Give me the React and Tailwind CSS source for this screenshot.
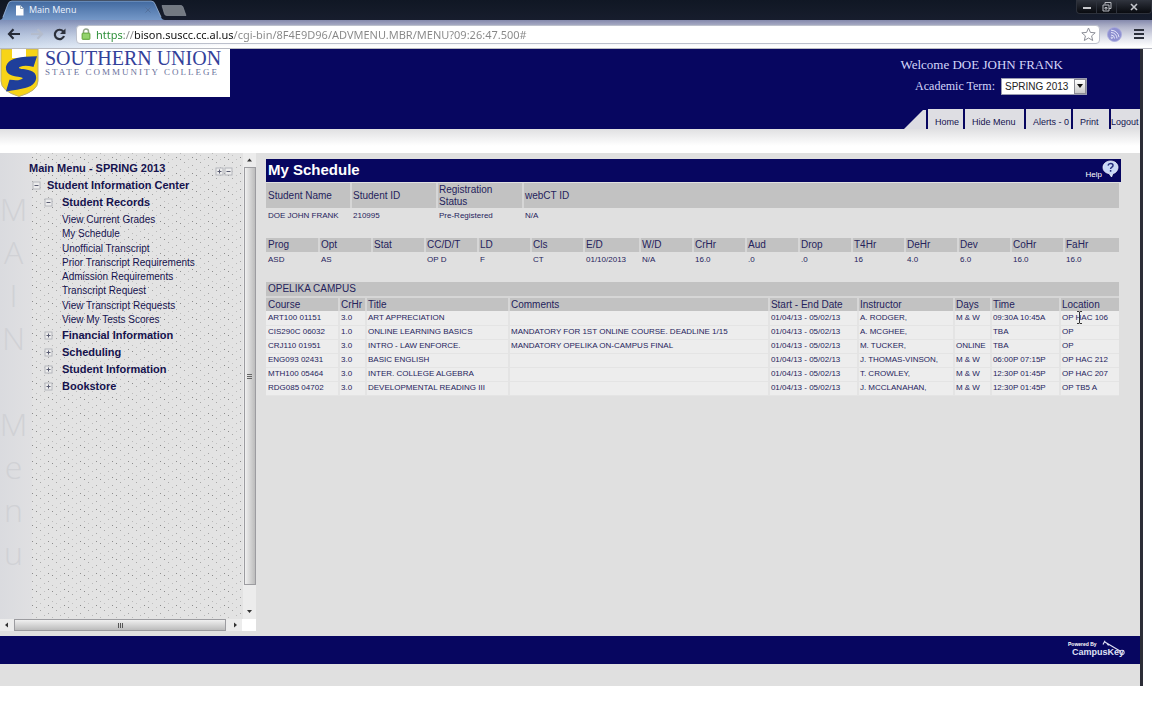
import React, { useState } from "react";

const records = [
  "View Current Grades",
  "My Schedule",
  "Unofficial Transcript",
  "Prior Transcript Requirements",
  "Admission Requirements",
  "Transcript Request",
  "View Transcript Requests",
  "View My Tests Scores",
];

const sections = ["Financial Information", "Scheduling", "Student Information", "Bookstore"];

const totals = [
  ["Prog", "ASD"],
  ["Opt", "AS"],
  ["Stat", ""],
  ["CC/D/T", "OP D"],
  ["LD", "F"],
  ["Cls", "CT"],
  ["E/D", "01/10/2013"],
  ["W/D", "N/A"],
  ["CrHr", "16.0"],
  ["Aud", ".0"],
  ["Drop", ".0"],
  ["T4Hr", "16"],
  ["DeHr", "4.0"],
  ["Dev", "6.0"],
  ["CoHr", "16.0"],
  ["FaHr", "16.0"],
];

const courseHeads = ["Course", "CrHr", "Title", "Comments", "Start - End Date", "Instructor", "Days", "Time", "Location"];

const courses = [
  ["ART100 01151", "3.0", "ART APPRECIATION", "", "01/04/13 - 05/02/13", "A. RODGER,", "M & W", "09:30A 10:45A", "OP HAC 106"],
  ["CIS290C 06032", "1.0", "ONLINE LEARNING BASICS", "MANDATORY FOR 1ST ONLINE COURSE. DEADLINE 1/15", "01/04/13 - 05/02/13", "A. MCGHEE,", "", "TBA", "OP"],
  ["CRJ110 01951", "3.0", "INTRO - LAW ENFORCE.", "MANDATORY OPELIKA ON-CAMPUS FINAL", "01/04/13 - 05/02/13", "M. TUCKER,", "ONLINE", "TBA", "OP"],
  ["ENG093 02431", "3.0", "BASIC ENGLISH", "", "01/04/13 - 05/02/13", "J. THOMAS-VINSON,", "M & W", "06:00P 07:15P", "OP HAC 212"],
  ["MTH100 05464", "3.0", "INTER. COLLEGE ALGEBRA", "", "01/04/13 - 05/02/13", "T. CROWLEY,", "M & W", "12:30P 01:45P", "OP HAC 207"],
  ["RDG085 04702", "3.0", "DEVELOPMENTAL READING III", "", "01/04/13 - 05/02/13", "J. MCCLANAHAN,", "M & W", "12:30P 01:45P", "OP TB5 A"],
];

const head = "border-r-2 border-[#d6d6d6] bg-[#c2c2c2] pl-px text-left text-[10px] leading-[12px] font-normal whitespace-nowrap first:pl-[2px] last:border-r-0";
const cell = "pl-[2px] text-left text-[8px] whitespace-nowrap";

const TreeIcon = ({ open }) => (
  <svg width="9" height="9" viewBox="0 0 9 9" className="shrink-0" aria-hidden="true">
    <rect x="1" y="1" width="7" height="7" fill="#ececec" stroke="#b4b6bc" />
    <path d={open ? "M2.500 4.500h4" : "M2.500 4.500h4M4.500 2.500v4"} stroke="#5a5d72" />
  </svg>
);

const BrowserBar = () => (
  <div className="font-['Noto_Sans',sans-serif]">
    <div className="relative flex h-[20px] items-start bg-linear-to-b from-[#101724] to-[#171d2d]">
      <div className="relative flex h-[20px] w-[165px] items-center pl-[15px]">
        <svg width="165" height="20" viewBox="0 0 165 20" className="absolute top-0 left-0" aria-hidden="true">
          <defs>
            <linearGradient id="tab" x1="0" y1="0" x2="0" y2="1">
              <stop offset="0" stopColor="#41699f" />
              <stop offset="1" stopColor="#7598c8" />
            </linearGradient>
          </defs>
          <path d="M0 20 2 19 8 4Q9 1 12 1H151Q154 1 155 4L161 17Q162 20 165 20Z" fill="url(#tab)" />
          <path d="M3 17 8 4Q9 1 12 1H151Q154 1 155 4L161 17" fill="none" stroke="#a6c1e4" strokeOpacity="0.7" />
        </svg>
        <svg width="9" height="11" viewBox="0 0 9 11" className="relative" aria-hidden="true">
          <path d="M1 .5h4.500l3 3V10.500H1z" fill="#fff" />
          <path d="M5.500.5v3h3" fill="none" stroke="#9ab" />
        </svg>
        <span className="relative ml-[5px] flex-1 font-['Open_Sans',sans-serif] text-[9px] leading-[20px] text-[#edf3ff]">Main Menu</span>
        <button aria-label="Close tab" className="relative mr-[13px]">
          <svg width="8" height="8" viewBox="0 0 8 8"><path d="m1.500 1.500 5 5m0-5-5 5" stroke="#54719c" /></svg>
        </button>
      </div>
      <button aria-label="New tab" className="mt-[5px] -ml-[4px]">
        <svg width="26" height="11" viewBox="0 0 26 11"><path d="M1 .5h19q1.500 0 2 1.500l3 8.500H6q-2 0-2.500-1.500z" fill="#737982" stroke="#9299a2" strokeWidth=".6" /></svg>
      </button>
      <div className="ml-auto flex h-[14px] w-[76px] divide-x divide-[#2d313b] rounded-b border border-t-0 border-[#2d313b] bg-linear-to-b from-[#30343e] to-[#090b10]">
        <button aria-label="Minimize" className="flex w-[20px] items-end justify-center pb-[4px]"><span className="h-[2px] w-[8px] bg-[#c8c8cc]" /></button>
        <button aria-label="Restore" className="flex w-[20px] items-center justify-center">
          <svg width="10" height="10" viewBox="0 0 10 10" fill="none" stroke="#b8bac0"><path d="M3 2.500V.5h6v6H7" /><path d="M1 3h6v6H1zM3 5.500h2v1.500H3z" /></svg>
        </button>
        <button aria-label="Close" className="flex flex-1 items-center justify-center">
          <svg width="8" height="8" viewBox="0 0 8 8"><path d="m1 1 6 6m0-6L1 7" stroke="#c4c6cc" strokeWidth="1.600" /></svg>
        </button>
      </div>
    </div>
    <div className="flex h-[29px] items-center border-b border-[#b8bac2] bg-[linear-gradient(90deg,#6f97cc59,#6f97cc00_220px),linear-gradient(180deg,#8489ac_0,#b2b5cb_25%,#dddfe9_60%,#ffffff_95%)]">
      <div className="flex w-[76px] shrink-0 items-center gap-[9px] pl-[7px]">
        <button aria-label="Back"><svg width="14" height="12" viewBox="0 0 14 12" fill="none" stroke="#272c38" strokeWidth="2.200"><path d="M13 6H2M6.500 1.200 2 6l4.500 4.800" /></svg></button>
        <button aria-label="Forward"><svg width="14" height="12" viewBox="0 0 14 12" fill="none" stroke="#b4bccc" strokeWidth="2.200"><path d="M1 6h11M7.500 1.200 12 6l-4.500 4.800" /></svg></button>
        <button aria-label="Reload"><svg width="13" height="13" viewBox="0 0 13 13"><path d="M10.200 3.500A4.700 4.700 0 1 0 11 8" fill="none" stroke="#2c303b" strokeWidth="2.200" /><path d="M12.500.5v5.500H7z" fill="#2c303b" /></svg></button>
      </div>
      <div className="flex h-[19px] min-w-0 flex-1 items-center rounded-sm border border-[#bcc0cc] bg-white pr-[3px] pl-[4px]">
        <svg width="10" height="12" viewBox="0 0 10 12" aria-hidden="true">
          <path d="M2.500 6V3.500a2.500 2.500 0 0 1 5 0V6" fill="none" stroke="#93a58a" strokeWidth="1.500" />
          <rect x="1" y="5" width="8" height="6.500" rx="1" fill="#85c95b" stroke="#60a03f" strokeWidth=".8" />
          <path d="M2 7h6M2 9h6" stroke="#b3e294" strokeWidth=".7" />
        </svg>
        <input
          aria-label="Address"
          className="ml-[5px] h-[17px] min-w-0 flex-1 bg-[linear-gradient(90deg,#278c33_28px,#888888_28px,#888888_39px,#111111_39px,#111111_138px,#868686_138px)] bg-clip-text text-[11px] text-transparent outline-none"
          defaultValue="https://bison.suscc.cc.al.us/cgi-bin/8F4E9D96/ADVMENU.MBR/MENU?09:26:47.500#"
        />
        <button aria-label="Bookmark">
          <svg width="15" height="15" viewBox="0 0 15 15"><path d="m7.500 1 1.900 4.400 4.800.4-3.600 3.100 1.100 4.600-4.200-2.500-4.200 2.500 1.100-4.600L.8 5.800l4.800-.4z" fill="#fff" stroke="#8d8f98" /></svg>
        </button>
      </div>
      <button aria-label="Feed" className="ml-[7px]">
        <svg width="15" height="15" viewBox="0 0 15 15" fill="none" stroke="#e4e5fa"><circle cx="7.500" cy="7.500" r="7" fill="#8d8fd0" stroke="#a8aade" strokeWidth=".8" /><path d="M4 8a3.500 3.500 0 0 1 3.500 3.500M4 5.500a6 6 0 0 1 6 6M4 3.200a8 8 0 0 1 8 7" /><circle cx="4.800" cy="10.800" r=".7" /></svg>
      </button>
      <button aria-label="Browser menu" className="mr-[8px] ml-[12px] flex w-[10px] flex-col gap-[2px]">
        <span className="h-[2px] bg-[#2b2f3a]" />
        <span className="h-[2px] bg-[#2b2f3a]" />
        <span className="h-[2px] bg-[#2b2f3a]" />
      </button>
    </div>
  </div>
);

const Logo = () => (
  <div className="flex h-[48px] w-[230px] bg-white">
    <svg width="40" height="48" viewBox="0 0 40 48" className="shrink-0" aria-hidden="true">
      <path d="M1 0H38V32Q38 42 19 47.500 1 42 1 32Z" fill="#f7d417" stroke="#b9ad74" />
      <path d="M12 0h14v9H12z" fill="#fff" />
      <path d="M36 8 33 17Q25 15 20 17C17 18 18 20 21 20.500 31 21.500 37 24 35 31 33 38 22 39 7 41.500L10 31.500Q20 33 23 30C25 27.500 20 27.500 15 26.500 7 25 5 20 8 15 12 9 24 8 36 8Z" fill="#1f3f9b" stroke="#1f3f9b" strokeWidth="1.500" />
    </svg>
    <div className="min-w-0 flex-1 pl-[5px] font-['Liberation_Serif',serif] whitespace-nowrap text-[#33419a]">
      <div className="text-[20px] leading-[18px]">SOUTHERN UNION</div>
      <div className="text-[9px] leading-[10px] tracking-[2px] text-[#6c739c]">STATE COMMUNITY COLLEGE</div>
    </div>
  </div>
);

const Header = ({ term, setTerm }) => (
  <header>
    <div className="flex h-[80px] items-start justify-between bg-[#070660]">
      <Logo />
      <div className="flex h-full flex-col items-end font-['Liberation_Serif',serif] text-[#d5d7fa]">
        <p className="mt-[7px] mr-[77px] text-[13px] leading-[18px]">Welcome DOE JOHN FRANK</p>
        <div className="mt-[3px] mr-[53px] flex items-center gap-[6px]">
          <label htmlFor="term" className="text-[12px] leading-[18px]">Academic Term:</label>
          <div className="relative">
            <select
              id="term"
              className="block h-[17px] w-[86px] appearance-none border border-[#9a9cb0] bg-white pl-[3px] font-['Liberation_Sans',sans-serif] text-[10px] leading-[15px] text-[#222]"
              value={term}
              onChange={(event) => setTerm(event.target.value)}
            >
              <option>SPRING 2013</option>
            </select>
            <span className="pointer-events-none absolute top-[1px] right-[1px] flex h-[15px] w-[12px] items-center justify-center border border-[#8c8c94] bg-linear-to-b from-white to-[#c9c9c9]">
              <svg width="6" height="4" viewBox="0 0 6 4"><path d="M0 0h6L3 4z" fill="#111" /></svg>
            </span>
          </div>
        </div>
        <nav className="mt-auto flex h-[20px] font-['Liberation_Sans',sans-serif] text-[9px] leading-[26px] text-[#15124e]">
          <svg width="22" height="20" viewBox="0 0 22 20" aria-hidden="true"><path d="M0 20 19 1H22V20Z" fill="#dcdce2" /></svg>
          <a href="#home" className="w-[37px] border-l-2 border-[#070660] bg-[#dedee3] pl-[7px]">Home</a>
          <a href="#hide" className="w-[61px] border-l-2 border-[#070660] bg-[#dedee3] pl-[7px]">Hide Menu</a>
          <a href="#alerts" className="w-[47px] border-l-2 border-[#070660] bg-[#dedee3] pl-[7px]">Alerts - 0</a>
          <a href="#print" className="w-[38px] border-l-2 border-[#070660] bg-[#dedee3] pl-[7px]">Print</a>
          <a href="#logout" className="w-[31px] border-l-2 border-[#070660] bg-[#dedee3] whitespace-nowrap">Logout</a>
        </nav>
      </div>
    </div>
    <div className="h-[24px] bg-linear-to-b from-[#e0e0e2] to-white to-70%" />
  </header>
);

const MainMenu = () => (
  <div className="flex h-[466px]">
    <div aria-hidden="true" className="flex w-[32px] shrink-0 flex-col items-center bg-linear-to-r from-[#dadbdf] to-[#e0e0e2] pt-[34px] pr-[5px] font-['Open_Sans',sans-serif] text-[32px] leading-[43px] font-light text-[#d0d1d5]">
      {["M", "A", "I", "N"].map((letter) => <span key={letter}>{letter}</span>)}
      <span className="mt-[43px]">M</span>
      <span>e</span>
      <span>n</span>
      <span>u</span>
    </div>
    <nav className="min-w-0 flex-1 bg-[#e3e3e3] bg-[radial-gradient(circle_at_0.5px_4.5px,#8c8c8c_0.5px,transparent_0.8px),radial-gradient(circle_at_4.5px_6.5px,#8c8c8c_0.5px,transparent_0.8px),radial-gradient(circle_at_8.5px_9.5px,#a6a6a6_0.5px,transparent_0.8px),radial-gradient(circle_at_12.5px_6.5px,#c0c0c0_0.5px,transparent_0.8px),radial-gradient(circle_at_0.5px_12.5px,#a6a6a6_0.5px,transparent_0.8px),radial-gradient(circle_at_4.5px_0.5px,#bababa_0.5px,transparent_0.8px),radial-gradient(circle_at_12.5px_14.5px,#b8b8b8_0.5px,transparent_0.8px),radial-gradient(circle_at_8.5px_2.5px,#c0c0c0_0.5px,transparent_0.8px)] bg-size-[16px_16px] text-[#15124e]">
      <div className="-ml-[3px] flex h-[24px] items-center justify-between pt-[6px] pr-[10px]">
        <h2 className="text-[11px] font-bold">Main Menu - SPRING 2013</h2>
        <span className="flex pt-[6px]"><TreeIcon /><TreeIcon open /></span>
      </div>
      <div className="flex h-[17px] items-center gap-[6px] text-[11px] font-bold"><TreeIcon open /><a href="#center">Student Information Center</a></div>
      <div className="flex h-[17px] items-center gap-[9px] pl-[12px] text-[11px] font-bold"><TreeIcon open /><a href="#records">Student Records</a></div>
      <ul className="flex h-[116px] flex-col justify-between pt-[2px] pl-[30px] text-[10px] leading-[14px]">
        {records.map((item) => (
          <li key={item}><a href="#records">{item}</a></li>
        ))}
      </ul>
      {sections.map((item) => (
        <div key={item} className="flex h-[17px] items-center gap-[9px] pl-[12px] text-[11px] font-bold"><TreeIcon /><a href="#menu">{item}</a></div>
      ))}
    </nav>
    <div className="flex w-[13px] shrink-0 flex-col items-center bg-[#ececec]">
      <svg width="7" height="14" viewBox="0 0 7 14" aria-hidden="true"><path d="M1 8.500 3.500 5.500 6 8.500z" fill="#333" /></svg>
      <div className="flex h-[418px] w-[12px] flex-col items-center justify-center gap-[1px] border border-[#9c9ca0] bg-linear-to-r from-[#f0f0f0] to-[#bcbcbc]">
        <span className="h-px w-[5px] bg-[#666]" />
        <span className="h-px w-[5px] bg-[#666]" />
        <span className="h-px w-[5px] bg-[#666]" />
      </div>
      <svg width="7" height="10" viewBox="0 0 7 10" className="mt-[21px]" aria-hidden="true"><path d="M1 4h5L3.500 7z" fill="#333" /></svg>
    </div>
  </div>
);

const Sidebar = () => (
  <aside className="w-[256px] shrink-0">
    <MainMenu />
    <div className="flex h-[12px] bg-white">
      <div className="flex w-[242px] items-center bg-[#ececec]">
        <svg width="14" height="12" viewBox="0 0 14 12" aria-hidden="true"><path d="M8 3.500v5L5 6z" fill="#333" /></svg>
        <div className="flex h-[12px] flex-1 items-center justify-center gap-[1px] border border-[#9c9ca0] bg-linear-to-b from-[#f0f0f0] to-[#bcbcbc]">
          <span className="h-[5px] w-px bg-[#555]" />
          <span className="h-[5px] w-px bg-[#555]" />
          <span className="h-[5px] w-px bg-[#555]" />
        </div>
        <svg width="16" height="12" viewBox="0 0 16 12" aria-hidden="true"><path d="M8 3.500v5L11 6z" fill="#333" /></svg>
      </div>
    </div>
  </aside>
);

const Schedule = () => (
  <main className="min-w-0 flex-1 pt-[6px] pr-[19px] pl-[10px] text-[#25235c]">
    <div className="flex h-[23px] items-center justify-between bg-[#070660] px-[2px] text-white">
      <h1 className="text-[15px] font-bold">My Schedule</h1>
      <a href="#help" className="flex h-full items-center text-[8px]">
        <span className="pt-[9px]">Help</span>
        <svg width="17" height="18" viewBox="0 0 17 18" className="mb-[3px]" aria-hidden="true">
          <path d="M8.500 1C13 1 16 3.800 16 7.300S13 13.500 11 13.500L9.500 17 7 13.500C3 13 1 10.500 1 7.300S4 1 8.500 1Z" fill="#c9d8f7" stroke="#fff" strokeWidth=".7" />
          <path d="M6 5.500Q6.500 3.500 8.700 3.500 11 3.500 11 5.500 11 6.700 9.600 7.300 8.600 7.800 8.600 9M8.600 10v1.700" fill="none" stroke="#262e7c" strokeWidth="1.500" />
        </svg>
      </a>
    </div>

    <div className="pr-[2px]">
      <table className="mt-px w-full table-fixed">
        <colgroup>
          <col className="w-[85px]" />
          <col className="w-[86px]" />
          <col className="w-[86px]" />
          <col />
        </colgroup>
        <thead>
          <tr className="h-[25px]">
            <th className={head}>Student Name</th>
            <th className={head}>Student ID</th>
            <th className={head}>Registration<br />Status</th>
            <th className={head}>webCT ID</th>
          </tr>
        </thead>
        <tbody>
          <tr className="h-[16px]">
            <td className={cell}>DOE JOHN FRANK</td>
            <td className={cell}>210995</td>
            <td className={cell}>Pre-Registered</td>
            <td className={cell}>N/A</td>
          </tr>
        </tbody>
      </table>

      <table className="mt-[14px] w-full table-fixed">
        <colgroup>
          {totals.map(([name]) => (
            <col key={name} className={name === "E/D" ? "w-[56px]" : name === "FaHr" ? "" : "w-[53px]"} />
          ))}
        </colgroup>
        <thead>
          <tr className="h-[14px]">
            {totals.map(([name]) => <th key={name} className={head}>{name}</th>)}
          </tr>
        </thead>
        <tbody>
          <tr className="h-[15px]">
            {totals.map(([name, value]) => <td key={name} className={cell}>{value}</td>)}
          </tr>
        </tbody>
      </table>

      <table className="mt-[15px] w-full table-fixed">
        <colgroup>
          <col className="w-[73px]" />
          <col className="w-[27px]" />
          <col className="w-[143px]" />
          <col />
          <col className="w-[89px]" />
          <col className="w-[96px]" />
          <col className="w-[37px]" />
          <col className="w-[69px]" />
          <col className="w-[59px]" />
        </colgroup>
        <thead>
          <tr className="h-[15px] border-b-2 border-[#d6d6d6]">
            <th colSpan="9" className={head}>OPELIKA CAMPUS</th>
          </tr>
          <tr className="h-[14px]">
            {courseHeads.map((name) => <th key={name} className={head}>{name}</th>)}
          </tr>
        </thead>
        <tbody>
          {courses.map((row, index) => (
            <tr key={row[0]} className="h-[14px] border-b border-[#e4e4e4]">
              {row.map((value, column) => (
                <td key={column} className="relative border-r-2 border-[#e4e4e4] bg-[#ededed] pl-px text-[8px] leading-[12px] whitespace-nowrap first:pl-[2px] last:border-r-0">
                  {value}
                  {index === 0 && column === 8 && (
                    <svg width="7" height="13" viewBox="0 0 7 13" className="absolute top-0 left-[15px]" aria-hidden="true">
                      <path d="M1 .5h2l.5.5.5-.5h2M3.500 1v11M1 12.500h2l.5-.5.5.5h2" fill="none" stroke="#333" />
                    </svg>
                  )}
                </td>
              ))}
            </tr>
          ))}
        </tbody>
      </table>
    </div>
  </main>
);

const Footer = () => (
  <footer className="pb-[22px]">
    <div className="flex h-[28px] items-center justify-end bg-[#070660] pr-[18px] text-white">
      <div className="relative h-[20px] w-[54px] whitespace-nowrap">
        <div className="text-[5px] leading-[8px] font-bold">Powered By</div>
        <div className="pl-[4px] text-[9px] leading-[9px] font-bold text-[#dfe1f5]">CampusKey</div>
        <svg width="24" height="18" viewBox="0 0 24 18" className="absolute top-0 -right-[3px]" fill="none" stroke="#dfe1f5" aria-hidden="true">
          <path d="M2 4.500 4 .8M3 1.500 19 11M6 3.500l1.500 2" strokeWidth="1.200" />
          <circle cx="21" cy="12.500" r="2.300" />
        </svg>
      </div>
    </div>
  </footer>
);

export default function App() {
  const [term, setTerm] = useState("SPRING 2013");

  return (
    <div className="min-h-screen bg-white">
      <BrowserBar />
      <div className="mr-[9px] border-r-[3px] border-[#2c2d36] bg-[#e0e0e0] font-['Liberation_Sans',Arial,sans-serif]">
        <Header term={term} setTerm={setTerm} />
        <div className="flex min-h-[483px]">
          <Sidebar />
          <Schedule />
        </div>
        <Footer />
      </div>
    </div>
  );
}
